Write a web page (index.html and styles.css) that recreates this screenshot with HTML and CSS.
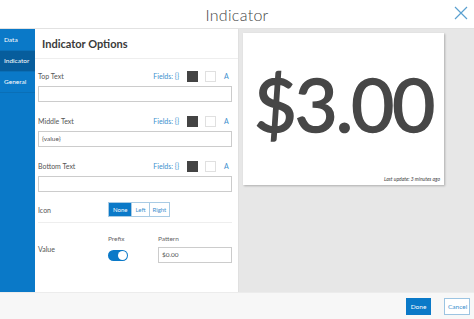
FILE: index.html
```html
<!DOCTYPE html>
<html lang="en">
<head>
  <meta charset="UTF-8" />
  <title>Indicator</title>
  <link rel="stylesheet" href="styles.css">
</head>
<body>
  <div class="dialog">
    <div class="header">
      <h1>Indicator</h1>
      <svg class="close" width="14" height="14" viewBox="0 0 14 14">
        <path d="M1 1L13 13M13 1L1 13" stroke="#5aa0d0" stroke-width="1.2" fill="none"/>
      </svg>
    </div>

    <div class="main">
      <div class="tabs">
        <div class="tab">Data</div>
        <div class="tab active">Indicator</div>
        <div class="tab">General</div>
      </div>

      <div class="options">
        <div class="options-title">Indicator Options</div>

        <div class="field">
          <div class="field-head">
            <span class="label">Top Text</span>
            <span class="fields">Fields: {}</span>
            <span class="swatch dark"></span>
            <span class="swatch light"></span>
            <span class="font-a">A</span>
          </div>
          <div class="input"></div>
        </div>

        <div class="field">
          <div class="field-head">
            <span class="label">Middle Text</span>
            <span class="fields">Fields: {}</span>
            <span class="swatch dark"></span>
            <span class="swatch light"></span>
            <span class="font-a">A</span>
          </div>
          <div class="input">{value}</div>
        </div>

        <div class="field">
          <div class="field-head">
            <span class="label">Bottom Text</span>
            <span class="fields">Fields: {}</span>
            <span class="swatch dark"></span>
            <span class="swatch light"></span>
            <span class="font-a">A</span>
          </div>
          <div class="input"></div>
        </div>

        <div class="row icon-row">
          <span class="row-label">Icon</span>
          <div class="segmented">
            <span class="seg on">None</span>
            <span class="seg">Left</span>
            <span class="seg">Right</span>
          </div>
        </div>

        <div class="row value-row">
          <span class="row-label">Value</span>
          <div class="col prefix">
            <span class="small-label">Prefix</span>
            <span class="toggle"><span class="knob"></span></span>
          </div>
          <div class="col pattern">
            <span class="small-label">Pattern</span>
            <div class="input small">$0.00</div>
          </div>
        </div>
      </div>

      <div class="preview">
        <div class="card">
          <div class="big">$3.00</div>
          <div class="updated">Last update: 3 minutes ago</div>
        </div>
      </div>
    </div>

    <div class="footer">
      <button class="btn primary">Done</button>
      <button class="btn">Cancel</button>
    </div>
  </div>
</body>
</html>
```

FILE: styles.css
```css
body {
  margin: 0;
  font-family: 'Lato', 'Open Sans', sans-serif;
  color: #555;
  background: #fff;
}

.dialog {
  width: 474px;
  height: 319px;
  display: flex;
  flex-direction: column;
}

.header {
  height: 28px;
  border-bottom: 1px solid #e2e2e2;
  display: flex;
  align-items: center;
  justify-content: center;
  position: relative;
}

.header h1 {
  margin: 0;
  font-size: 16px;
  font-weight: 300;
  color: #444;
  letter-spacing: 0.3px;
}

.close {
  position: absolute;
  right: 6px;
  top: 6px;
}

.main {
  flex: 1;
  display: flex;
  min-height: 0;
}

.tabs {
  width: 35px;
  background: #0a79c8;
  padding-top: 1px;
}

.tab {
  height: 20px;
  line-height: 20px;
  font-size: 6.5px;
  color: #fff;
  padding-left: 4px;
  border-bottom: 1px solid #0a6fb7;
}

.tab.active {
  background: #075d9c;
}

.options {
  width: 204px;
  padding: 0 6px 0 3px;
  border-right: 1px solid #e0e0e0;
  box-sizing: border-box;
  display: flex;
  flex-direction: column;
}

.options-title {
  height: 29px;
  line-height: 30px;
  font-size: 11px;
  font-weight: 700;
  color: #3a3a3a;
  margin: 0 -6px 0 -3px;
  padding-left: 7px;
  border-bottom: 1px solid #eee;
}

.field {
  padding-top: 11px;
}

.field + .field {
  padding-top: 13px;
}

.field-head {
  display: flex;
  align-items: center;
  height: 12px;
  margin-bottom: 4px;
  font-size: 7px;
}

.label {
  flex: 1;
  color: #555;
}

.fields {
  color: #3b8fce;
  margin-right: 8px;
}

.swatch {
  width: 11px;
  height: 11px;
  box-sizing: border-box;
}

.swatch.dark {
  background: #444;
  margin-right: 7px;
}

.swatch.light {
  background: #fff;
  border: 1px solid #e0e0e0;
  margin-right: 8px;
}

.font-a {
  color: #3b8fce;
  width: 8px;
}

.input {
  height: 16px;
  border: 1px solid #ccc;
  box-sizing: border-box;
  font-size: 6.5px;
  line-height: 14px;
  padding-left: 3px;
  color: #555;
}

.row {
  display: flex;
  font-size: 7px;
}

.icon-row {
  margin-top: 10px;
  align-items: center;
  height: 15px;
  padding-bottom: 5px;
}

.row-label {
  width: 70px;
  color: #555;
}

.segmented {
  display: flex;
  border: 1px solid #a9cbe4;
}

.seg {
  font-size: 6px;
  padding: 0 3px;
  height: 13px;
  line-height: 13px;
  color: #3b8fce;
  background: #fff;
  border-left: 1px solid #a9cbe4;
}

.seg.on {
  background: #0a79c8;
  color: #fff;
  border-left: none;
  padding: 0 4px;
}

.value-row {
  border-top: 1px solid #eee;
  padding-top: 12px;
  height: 50px;
}

.value-row .row-label {
  padding-top: 10px;
}

.col {
  display: flex;
  flex-direction: column;
}

.prefix {
  width: 50px;
}

.pattern {
  flex: 1;
}

.small-label {
  font-size: 6.5px;
  color: #666;
  margin-bottom: 5px;
}

.toggle {
  margin-top: 3px;
  width: 20px;
  height: 11px;
  border-radius: 6px;
  background: #0a79c8;
  display: flex;
  justify-content: flex-end;
  align-items: center;
  padding: 0 1px;
  box-sizing: border-box;
}

.knob {
  width: 9px;
  height: 9px;
  border-radius: 50%;
  background: #fff;
}

.preview {
  flex: 1;
  background: #e7e7e7;
  padding: 4px 0 0 4px;
}

.card {
  width: 201px;
  height: 152px;
  background: #fff;
  box-shadow: 1px 1px 2px rgba(0, 0, 0, 0.25);
  position: relative;
  display: flex;
  flex-direction: column;
  align-items: center;
}

.big {
  font-size: 74px;
  font-weight: 400;
  -webkit-text-stroke: 1.6px #474747;
  color: #474747;
  margin-top: 34px;
  line-height: 1;
  letter-spacing: -2px;
}

.updated {
  position: absolute;
  right: 4px;
  bottom: 3px;
  font-size: 5px;
  font-style: italic;
  color: #444;
}

.footer {
  height: 26px;
  background: #f7f7f7;
  border-top: 1px solid #ececec;
  display: flex;
  align-items: center;
  justify-content: flex-end;
  padding-right: 4px;
  gap: 13px;
}

.btn {
  font-family: 'Lato', sans-serif;
  font-size: 6.5px;
  height: 17px;
  padding: 0 3px;
  width: 26px;
  background: #fff;
  border: 1px solid #9cc4e2;
  color: #3b8fce;
}

.btn.primary {
  width: 25px;
  background: #0a79c8;
  border-color: #0a79c8;
  color: #fff;
}
```
